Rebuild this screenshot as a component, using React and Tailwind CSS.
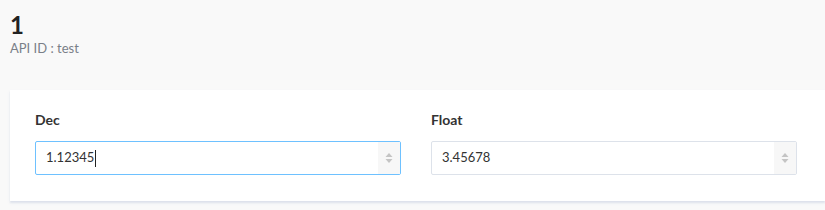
import React from "react";

function Spinner() {
  return (
    <div className="flex h-full w-[22px] items-center justify-center bg-[#f7f7f7]">
      <svg width="8" height="12" viewBox="0 0 8 12">
        <path d="M4 1 L7.5 5 L0.5 5 Z" fill="#c4c4c4" />
        <path d="M4 11 L7.5 7 L0.5 7 Z" fill="#c4c4c4" />
      </svg>
    </div>
  );
}

function Field({ label, value, focused }) {
  return (
    <div className="flex w-[366px] flex-col">
      <div className="h-[20px] text-[14px] font-bold leading-[20px] text-[#333]">{label}</div>
      <div
        className={
          "mt-[11px] flex h-[34px] items-center rounded-[2px] border bg-white " +
          (focused ? "border-[#6ec1ff]" : "border-[#dde2ea]")
        }
      >
        <div className="flex flex-1 items-center pl-[10px] text-[13px] text-[#333]">
          {value}
          {focused && <span className="ml-[1px] inline-block h-[17px] w-[1px] bg-[#222]" />}
        </div>
        <Spinner />
      </div>
    </div>
  );
}

export default function App() {
  return (
    <div className="h-[210px] w-full overflow-hidden bg-[#f9f9f9] font-['Lato','Liberation_Sans',sans-serif]">
      <div className="px-[10px] pt-[10px]">
        <div className="text-[24px] font-bold leading-[30px] text-[#222]">1</div>
        <div className="text-[13px] leading-[16px] text-[#7a7f88]">API ID : test</div>
      </div>
      <div className="ml-[10px] mt-[34px] h-[111px] bg-white pl-[25px] pt-[20px] shadow-[0_2px_2px_rgba(200,208,225,0.6)]">
        <div className="flex gap-[30px]">
          <Field label="Dec" value="1.12345" focused />
          <Field label="Float" value="3.45678" />
        </div>
      </div>
    </div>
  );
}
